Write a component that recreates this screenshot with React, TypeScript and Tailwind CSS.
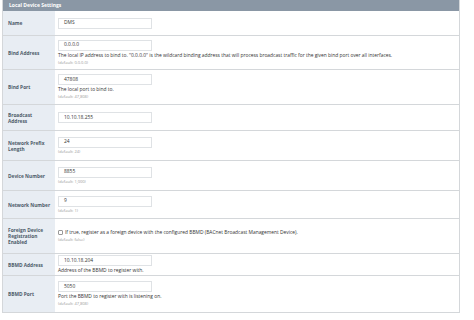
import React from 'react';

type Row = {
    label: string;
    h: number;
    value?: string;
    checkbox?: boolean;
    desc?: string;
    def?: string;
};

const rows: Row[] = [
    { label: 'Name', h: 24, value: 'DMS' },
    {
        label: 'Bind Address',
        h: 34,
        value: '0.0.0.0',
        desc: 'The local IP address to bind to. "0.0.0.0" is the wildcard binding address that will process broadcast traffic for the given bind port over all interfaces.',
        def: '(default: 0.0.0.0)',
    },
    { label: 'Bind Port', h: 35, value: '47808', desc: 'The local port to bind to.', def: '(default: 47,808)' },
    { label: 'Broadcast Address', h: 26, value: '10.10.18.255' },
    { label: 'Network Prefix Length', h: 30, value: '24', def: '(default: 24)' },
    { label: 'Device Number', h: 30, value: '8855', def: '(default: 1,000)' },
    { label: 'Network Number', h: 28, value: '9', def: '(default: 1)' },
    {
        label: 'Foreign Device Registration Enabled',
        h: 35,
        checkbox: true,
        desc: 'If true, register as a foreign device with the configured BBMD (BACnet Broadcast Management Device).',
        def: '(default: false)',
    },
    { label: 'BBMD Address', h: 22, value: '10.10.18.204', desc: 'Address of the BBMD to register with.' },
    {
        label: 'BBMD Port',
        h: 37,
        value: '5050',
        desc: 'Port the BBMD to register with is listening on.',
        def: '(default: 47,808)',
    },
];

export default function App() {
    return (
        <div className="h-[320px] w-[474px] bg-white pl-[2px] font-['Open_Sans',sans-serif]">
            <div className="w-[458px] border-x border-b border-[#d4d7da]">
                <div className="flex h-[11px] items-center bg-[#8a97a5] pl-[6px] text-[5px] font-bold text-white">
                    Local Device Settings
                </div>
                {rows.map((r, i) => (
                    <div
                        key={r.label}
                        className={`flex ${i > 0 ? 'border-t border-[#d4d7da]' : ''}`}
                        style={{ height: r.h }}
                    >
                        <div className="flex w-[52px] shrink-0 items-center bg-[#e8edf3] pl-[5px] pr-[3px] text-[4.8px] leading-[6px] font-bold text-[#4d5b69]">
                            {r.label}
                        </div>
                        <div className="flex flex-1 flex-col justify-center pl-[3px]">
                            {r.value && (
                                <div className="flex h-[11px] w-[94px] items-center border border-[#dfe2e5] bg-white pl-[5px] text-[4.9px] text-[#333]">
                                    {r.value}
                                </div>
                            )}
                            {r.checkbox && (
                                <div className="flex items-center gap-[2px] text-[4.9px] leading-[7px] text-[#333]">
                                    <span className="inline-block h-[5px] w-[5px] rounded-[1px] border border-[#999] bg-white" />
                                    {r.desc}
                                </div>
                            )}
                            {!r.checkbox && r.desc && (
                                <div className="mt-[1px] text-[4.9px] leading-[7px] text-[#333]">{r.desc}</div>
                            )}
                            {r.def && <div className="mt-[1px] text-[4px] leading-[6px] text-[#999]">{r.def}</div>}
                        </div>
                    </div>
                ))}
            </div>
        </div>
    );
}
